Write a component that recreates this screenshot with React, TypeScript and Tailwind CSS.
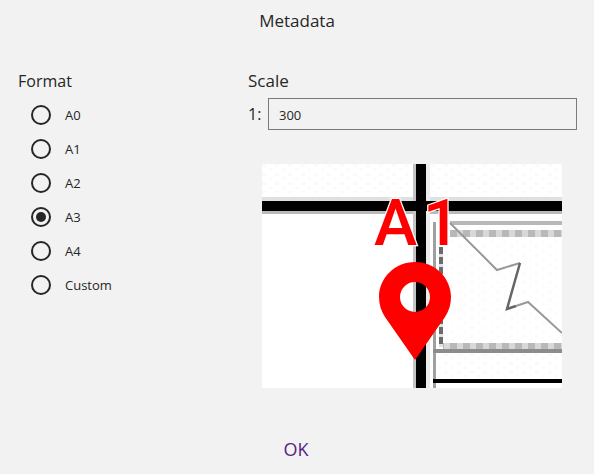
const formats = ["A0", "A1", "A2", "A3", "A4", "Custom"];

function Radio({ label, checked }: { label: string; checked?: boolean }) {
  return (
    <label className="flex h-[34px] items-center">
      <span className="flex h-5 w-5 items-center justify-center rounded-full border-2 border-[#262626]">
        {checked && <span className="h-[10px] w-[10px] rounded-full bg-[#262626]" />}
      </span>
      <span className="ml-[14px] pt-px text-[13px] text-[#262626]">{label}</span>
    </label>
  );
}

// the map preview: scanned plan with the red pin on top
function MapPreview() {
  return (
    <svg viewBox="262 164 300 224" className="block h-[224px] w-[300px]">
      <defs>
        <pattern id="dither" x="262" y="164" width="13" height="9" patternUnits="userSpaceOnUse">
          <rect x="0" y="0" width="4" height="3" fill="#fafafa" />
          <rect x="7" y="4" width="3" height="3" fill="#fbfbfb" />
        </pattern>
        <pattern id="band" x="450" y="230" width="13" height="7" patternUnits="userSpaceOnUse">
          <rect width="13" height="7" fill="#d8d8d8" />
          <rect width="7" height="7" fill="#b8b8b8" />
        </pattern>
        <pattern id="dash" x="439" y="247" width="4" height="10" patternUnits="userSpaceOnUse">
          <rect width="4" height="7" fill="#6b6b6b" />
          <rect y="7" width="4" height="3" fill="#e0e0e0" />
        </pattern>
      </defs>
      <rect x="262" y="164" width="300" height="224" fill="#fff" />
      <rect x="262" y="164" width="150" height="29" fill="url(#dither)" />
      <rect x="430" y="164" width="132" height="29" fill="url(#dither)" />
      <rect x="444" y="238" width="118" height="105" fill="url(#dither)" opacity="0.7" />
      <rect x="436" y="354" width="126" height="24" fill="url(#dither)" />
      <g shapeRendering="crispEdges">
        <rect x="262" y="197" width="300" height="4" fill="#e0e0e0" />
        <rect x="262" y="211" width="300" height="3" fill="#bababa" />
        <rect x="413" y="164" width="3" height="224" fill="#c4c4c4" />
        <rect x="426" y="164" width="4" height="224" fill="#ececec" />
        <rect x="262" y="201" width="300" height="10" fill="#000" />
        <rect x="416" y="164" width="10" height="224" fill="#000" />
        <rect x="433" y="222" width="3" height="166" fill="#a0a0a0" />
        <rect x="439" y="247" width="4" height="100" fill="url(#dash)" />
        <rect x="450" y="221" width="112" height="4" fill="#b8b8b8" />
        <rect x="450" y="230" width="112" height="7" fill="url(#band)" />
        <rect x="443" y="343" width="119" height="6" fill="url(#band)" />
        <rect x="433" y="349" width="129" height="4" fill="#8c8c8c" />
        <rect x="433" y="379" width="129" height="4" fill="#000" />
      </g>
      <polyline points="450,223 497,270 520,263" fill="none" stroke="#999" strokeWidth="2" />
      <polyline points="520,263 507,309 516,306" fill="none" stroke="#666" strokeWidth="2.5" />
      <polyline points="516,306 528,302 562,333" fill="none" stroke="#999" strokeWidth="2" />
      <text
        x="374 423"
        y="245"
        fontFamily="Roboto, Arial, sans-serif"
        fontSize="65"
        fontWeight="500"
        fill="#f00"
        stroke="#fff"
        strokeWidth="2.5"
        paintOrder="stroke"
      >
        A1
      </text>
      <path
        fillRule="evenodd"
        fill="#f00"
        d="M415 262C395 262 379 278 379 297C379 304 381 311 385 317L415 360L445 317C449 311 451 304 451 297C451 278 435 262 415 262ZM415 282A15 15 0 1 1 415 312A15 15 0 1 1 415 282Z"
      />
    </svg>
  );
}

export default function App() {
  return (
    <div className="flex h-[474px] w-[594px] flex-col overflow-hidden bg-[#f2f2f2] font-['Open_Sans','Noto_Sans',sans-serif] text-[#262626]">
      <h1 className="flex h-[42px] shrink-0 items-center justify-center text-[17px] font-normal">Metadata</h1>
      <div className="flex flex-1">
        <div className="w-[248px] shrink-0 pl-[18px] pt-[27px]">
          <div className="h-6 text-base leading-6">Format</div>
          <div className="pl-[13px] pt-[5px]">
            {formats.map((f) => (
              <Radio key={f} label={f} checked={f === "A3"} />
            ))}
          </div>
        </div>
        <div className="flex-1 pt-[27px]">
          <div className="h-6 text-[17px] leading-6">Scale</div>
          <div className="mt-[5px] flex items-center">
            <span className="w-5 text-base">1:</span>
            <input
              readOnly
              value="300"
              className="h-8 w-[309px] border border-[#7a7a7a] bg-[#f2f2f2] px-[10px] pt-px text-[13px] text-[#262626] outline-none"
            />
          </div>
          <div className="ml-[14px] mt-[34px]">
            <MapPreview />
          </div>
        </div>
      </div>
      <div className="flex h-[50px] shrink-0 items-center justify-center pr-[2px] text-[18px] text-[#5c2186]">OK</div>
    </div>
  );
}
